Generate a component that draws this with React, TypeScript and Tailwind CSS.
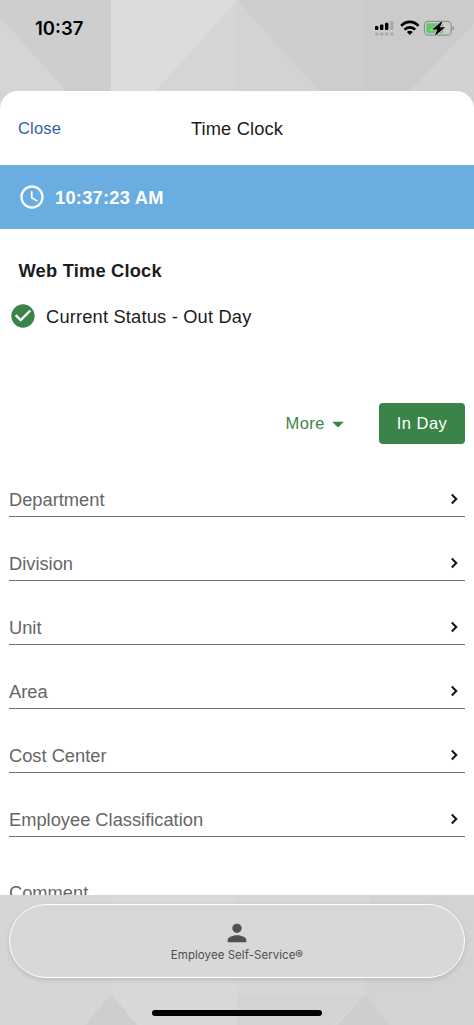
import { MdAccessTime, MdArrowDropDown, MdCheckCircle, MdPerson } from "react-icons/md";

const FIELDS = ["Department", "Division", "Unit", "Area", "Cost Center", "Employee Classification"];

function TopPattern() {
  return (
    <svg className="absolute inset-x-0 top-0" width="474" height="120" viewBox="0 0 474 120" aria-hidden="true">
      <rect width="474" height="120" fill="#d5d5d5" />
      <path d="M0 0H111V120H92L0 17Z" fill="#cecece" />
      <path d="M111 0H237L130 120H111Z" fill="#dcdcdc" />
      <path d="M237 0V120H345Z" fill="#d3d3d3" />
      <path d="M237 0H365V120H345Z" fill="#cecece" />
      <path d="M365 0H474V24L382 120H365Z" fill="#cbcbcb" />
      <path d="M474 24V120H382Z" fill="#d2d2d2" />
    </svg>
  );
}

function BottomPattern() {
  return (
    <svg className="absolute inset-0" width="474" height="130" viewBox="0 0 474 130" aria-hidden="true">
      <rect width="474" height="130" fill="#d6d6d6" />
      <path d="M111 0H237V130H137L111 99Z" fill="#d8d8d8" />
      <path d="M370 0H474V130H389L365 99V88Z" fill="#d3d3d3" />
      <path d="M237 99H365L333 130H237Z" fill="#d3d3d3" />
      <path d="M111 99L137 130H85Z" fill="#cecece" />
      <path d="M365 99L389 130H338Z" fill="#cecece" />
    </svg>
  );
}

function StatusIcons() {
  return (
    <svg className="mt-[19px] ml-auto" width="80" height="18" viewBox="0 0 80 18" aria-hidden="true">
      {/* dual sim signal */}
      <g fill="#000">
        <rect x="1" y="7" width="3.4" height="4" rx="0.9" />
        <rect x="6" y="5.5" width="3.4" height="5.5" rx="0.9" />
        <rect x="11" y="3.8" width="3.4" height="7.2" rx="0.9" />
      </g>
      <g fill="#aaa">
        <rect x="16.2" y="2" width="3.2" height="9" rx="0.9" />
        <rect x="1" y="13.4" width="3.4" height="3.2" rx="0.9" />
        <rect x="6" y="13.4" width="3.4" height="3.2" rx="0.9" />
        <rect x="11" y="13.4" width="3.4" height="3.2" rx="0.9" />
        <rect x="16.1" y="13.4" width="3.4" height="3.2" rx="0.9" />
      </g>
      <g fill="none" stroke="#000" strokeWidth="2.7">
        <path d="M27.2 6.8C32 1.5 39.7 1.5 44.5 6.8" />
        <path d="M30.5 10.6C33.4 7.5 38.3 7.5 41.2 10.6" />
      </g>
      <path d="M32.9 12.9C34.5 11.4 37.2 11.4 38.8 12.9L35.85 16Z" />
      <rect x="50.4" y="2.4" width="26.8" height="13.8" rx="4" fill="none" stroke="#929292" strokeWidth="1.2" />
      <rect x="52.3" y="4.3" width="16.8" height="10" rx="2" fill="#65c96b" />
      <path d="M78.6 7.2v4.2c1.6-.8 1.6-3.4 0-4.2Z" fill="#777" />
      <path d="M68.8 1.6L58 10.4h5.3l-2.6 6.6L71.3 8.3h-5.4Z" stroke="#d0d0d0" strokeWidth="1.5" paintOrder="stroke" />
    </svg>
  );
}

function FieldRow({ label }: { label: string }) {
  return (
    <button type="button" className="flex h-16 w-full items-end justify-between border-b border-[#707070] pb-1 text-left text-[#666]">
      <span className="text-[18.3px] leading-6">{label}</span>
      <svg className="mr-1.5 mb-[7px]" width="9" height="12" viewBox="0 0 9 12" fill="none" aria-hidden="true">
        <path d="M1.8 1.5L6.3 6L1.8 10.5" stroke="#111" strokeWidth="2" />
      </svg>
    </button>
  );
}

export default function App() {
  return (
    <div className="relative flex h-[1025px] w-[474px] flex-col overflow-hidden bg-[#d5d5d5] font-['Liberation_Sans',Arial,sans-serif] text-[#1c1c1c]">
      <TopPattern />

      <header className="relative flex h-[91px] shrink-0 pr-5 pl-[35px]">
        <span className="mt-[14px] font-[Inter,sans-serif] text-[18.5px] leading-7 font-semibold text-black">10:37</span>
        <StatusIcons />
      </header>

      <main className="relative min-h-0 flex-1 overflow-hidden rounded-t-[18px] bg-white">
        <div className="grid h-[74px] grid-cols-3 items-center px-[18px]">
          <button type="button" className="text-left text-[16.5px] tracking-[0.2px] text-[#3560a5]">
            Close
          </button>
          <h1 className="pt-0.5 text-center text-[18.3px] tracking-[0.15px]">Time Clock</h1>
        </div>

        <div className="flex h-16 items-center bg-[#6aade1] pl-[18px] text-white">
          <MdAccessTime className="size-7" />
          <span className="ml-[9px] pt-px text-[18.3px] font-bold tracking-[0.25px]">10:37:23 AM</span>
        </div>

        <h2 className="mt-[30px] ml-[18.5px] text-[18.3px] leading-6 font-bold tracking-[0.2px]">Web Time Clock</h2>

        <div className="mt-[19px] ml-[9px] flex h-7 items-center">
          <MdCheckCircle className="size-7 text-[#3b8449]" />
          <span className="ml-[9px] pt-0.5 text-[18.3px] tracking-[0.18px]">Current Status - Out Day</span>
        </div>

        <div className="mt-[73px] flex h-[41px] items-center justify-end pr-[9px] text-[16.5px] tracking-[0.5px]">
          <button type="button" className="flex items-center text-[#3b8449]">
            More
            <MdArrowDropDown className="-ml-px size-7" />
          </button>
          <button type="button" className="ml-[27px] h-[41px] w-[86px] rounded-[4px] bg-[#3b8449] text-white">
            In Day
          </button>
        </div>

        <div className="mt-[9px] px-[9px]">
          {FIELDS.map((label) => (
            <FieldRow key={label} label={label} />
          ))}
          <div className="mt-11 text-[18.3px] leading-6 text-[#666]">Comment</div>
        </div>
      </main>

      <footer className="relative h-[130px] shrink-0">
        <BottomPattern />
        <div className="relative flex h-full flex-col items-center px-[9px] pt-[9px]">
          <button
            type="button"
            className="flex h-[74px] w-full flex-col items-center rounded-full border-[1.5px] border-white bg-[#d8d8d8] text-[#505050] shadow-[0_2px_5px_rgba(0,0,0,0.12)]"
          >
            <MdPerson className="mt-[14px] size-7" />
            <span className="font-[Inter,sans-serif] text-[11.5px] leading-4 tracking-[0.05px]">Employee Self-Service®</span>
          </button>
          <div className="mt-[32px] h-1.5 w-[170px] rounded-full bg-black" />
        </div>
      </footer>
    </div>
  );
}
